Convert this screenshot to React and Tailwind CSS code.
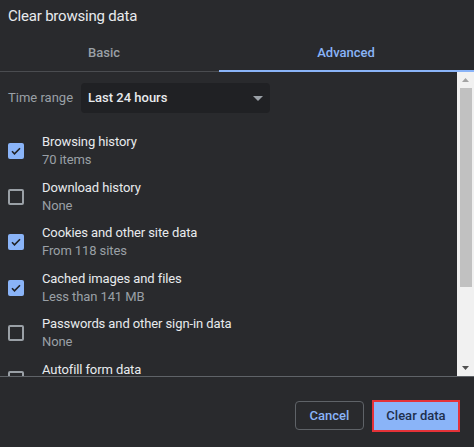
import React from 'react';

const items = [
  { title: 'Browsing history', sub: '70 items', checked: true },
  { title: 'Download history', sub: 'None', checked: false },
  { title: 'Cookies and other site data', sub: 'From 118 sites', checked: true },
  { title: 'Cached images and files', sub: 'Less than 141 MB', checked: true },
  { title: 'Passwords and other sign-in data', sub: 'None', checked: false },
  { title: 'Autofill form data', sub: '', checked: false },
];

function Checkbox({ checked }) {
  if (checked) {
    return (
      <div className="w-4 h-4 rounded-[2px] bg-[#8ab4f8] flex items-center justify-center shrink-0">
        <svg width="12" height="12" viewBox="0 0 24 24" fill="none" stroke="#202124" strokeWidth="3.2">
          <path d="M4 12.5l5 5L20 6.5" />
        </svg>
      </div>
    );
  }
  return <div className="w-4 h-4 rounded-[2px] border-2 border-[#9aa0a6] shrink-0" />;
}

function Row({ item }) {
  return (
    <div className="h-[45.5px] flex items-start shrink-0">
      <div className="w-[42px] pl-2 h-9 flex items-center">
        <Checkbox checked={item.checked} />
      </div>
      <div className="flex flex-col">
        <div className="text-[13px] leading-[18px] tracking-[-0.1px] text-[#e8eaed]">{item.title}</div>
        {item.sub && (
          <div className="text-[13px] leading-[18px] tracking-[-0.1px] text-[#9aa0a6]">{item.sub}</div>
        )}
      </div>
    </div>
  );
}

export default function App() {
  return (
    <div
      className="w-[474px] h-[447px] bg-[#292a2d] overflow-hidden flex flex-col"
      style={{ fontFamily: 'Roboto, "Liberation Sans", sans-serif' }}
    >
      {/* title */}
      <div className="h-[35px] px-2 pt-[6px] text-[15px] leading-[20px] tracking-[-0.2px] text-[#e8eaed]">
        Clear browsing data
      </div>

      {/* tabs */}
      <div className="h-[37px] flex border-b border-[#4a4c50] shrink-0">
        <div className="w-[219px] flex items-center justify-center pr-[11px] text-[13px] font-medium text-[#9aa0a6]">
          Basic
        </div>
        <div className="flex-1 flex items-center justify-center pr-[1px] text-[13px] font-medium text-[#8ab4f8] border-b-2 border-[#8ab4f8] -mb-px">
          Advanced
        </div>
      </div>

      {/* scroll area */}
      <div className="h-[305px] flex border-b border-[#5f6368] shrink-0">
        <div className="flex-1 overflow-hidden">
          <div className="flex items-center pt-[11px] pl-2">
            <div className="w-[73px] text-[13px] text-[#9aa0a6]">Time range</div>
            <div className="w-[189px] h-[30px] bg-[#202124] rounded-[4px] flex items-center justify-between pl-[7px] pr-[7px]">
              <span className="text-[13px] font-medium text-[#e8eaed]">Last 24 hours</span>
              <svg width="10" height="5" viewBox="0 0 10 5">
                <path d="M0 0h10L5 5z" fill="#9aa0a6" />
              </svg>
            </div>
          </div>
          <div className="flex flex-col pt-[20px]">
            {items.map((it) => (
              <Row key={it.title} item={it} />
            ))}
          </div>
        </div>

        {/* scrollbar */}
        <div className="w-[17px] bg-[#f1f1f1] flex flex-col items-center shrink-0">
          <div className="h-4 flex items-center justify-center">
            <svg width="7" height="4" viewBox="0 0 7 4">
              <path d="M0 4h7L3.5 0z" fill="#a3a3a3" />
            </svg>
          </div>
          <div className="w-[12px] h-[199px] bg-[#c1c1c1]" />
          <div className="flex-1" />
          <div className="h-4 flex items-center justify-center">
            <svg width="7" height="4" viewBox="0 0 7 4">
              <path d="M0 0h7L3.5 4z" fill="#505050" />
            </svg>
          </div>
        </div>
      </div>

      {/* footer */}
      <div className="flex-1 flex justify-end items-start pt-[23px] pr-[14px] gap-2">
        <button className="mt-px h-[29px] w-[69px] rounded-[4px] border border-[#5f6368] text-[13px] font-medium text-[#8ab4f8]">
          Cancel
        </button>
        <div className="border-2 border-[#e53238] h-[32px] w-[88px] flex">
          <button className="flex-1 bg-[#8ab4f8] text-[13px] font-medium text-[#1e2f4d]">
            Clear data
          </button>
        </div>
      </div>
    </div>
  );
}
